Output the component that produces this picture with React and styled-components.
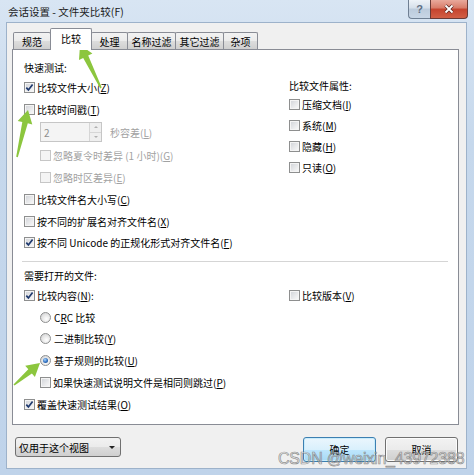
import React from 'react';
import styled, { createGlobalStyle } from 'styled-components';

const GlobalStyle = createGlobalStyle`
  html, body {
    margin: 0;
    padding: 0;
    background: #ffffff;
  }
  body {
    font-family: "Noto Sans CJK SC", "Noto Sans", sans-serif;
    font-size: 10px;
    color: #000;
  }
`;

const Window = styled.div`
  position: relative;
  width: 474px;
  height: 475px;
  display: flex;
  flex-direction: column;
  background: linear-gradient(180deg, #d8e5f3 0%, #c6d8ec 30%, #bfd3ea 100%);
  overflow: hidden;
`;

const TitleBar = styled.div`
  height: 22px;
  display: flex;
  align-items: flex-start;
  flex: none;
`;

const TitleText = styled.div`
  height: 23px;
  display: flex;
  align-items: center;
  padding-left: 8px;
  font-size: 10.5px;
  color: #1a1a1a;
`;

const CaptionButtons = styled.div`
  margin-left: auto;
  margin-right: 6px;
  display: flex;
`;

const HelpButton = styled.div`
  width: 22px;
  height: 19px;
  box-sizing: border-box;
  border: 1px solid #6f7f93;
  border-top: none;
  border-right: none;
  border-radius: 0 0 0 4px;
  background: linear-gradient(180deg, #eef3f8 0%, #d5dfea 45%, #bccbdc 50%, #c8d6e6 100%);
  display: flex;
  align-items: center;
  justify-content: center;
  font-family: "Liberation Sans", sans-serif;
  font-weight: bold;
  font-size: 11px;
  color: #5f6f84;
`;

const CloseButton = styled.div`
  width: 38px;
  height: 19px;
  box-sizing: border-box;
  border: 1px solid #6a3a36;
  border-top: none;
  border-radius: 0 0 4px 0;
  background: linear-gradient(180deg, #e9a99c 0%, #d87b68 45%, #c5432e 50%, #d25f45 100%);
  display: flex;
  align-items: center;
  justify-content: center;
`;

const Client = styled.div`
  flex: 1;
  margin: 0 7px 6px 6px;
  background: #f0f0f0;
  border: 1px solid #9db2ca;
  display: flex;
  flex-direction: column;
  padding: 5px 7px 0 5px;
  min-height: 0;
`;

const TabStrip = styled.div`
  display: flex;
  align-items: flex-end;
  height: 21px;
  padding-left: 2px;
  flex: none;
`;

const Tab = styled.div`
  position: relative;
  z-index: ${p => (p.$active ? 2 : 1)};
  box-sizing: border-box;
  width: ${p => p.$w}px;
  height: ${p => (p.$active ? 22 : 17)}px;
  margin-bottom: ${p => (p.$active ? -1 : 0)}px;
  margin-left: -1px;
  border: 1px solid #898c95;
  border-bottom: none;
  border-radius: 2px 2px 0 0;
  background: ${p =>
    p.$active
      ? '#ffffff'
      : 'linear-gradient(180deg, #f2f2f2 0%, #ebebeb 50%, #dddddd 51%, #cfcfcf 100%)'};
  display: flex;
  align-items: center;
  justify-content: center;
  padding-bottom: ${p => (p.$active ? 3 : 0)}px;
`;

const Panel = styled.div`
  height: 376px;
  flex: none;
  box-sizing: border-box;
  border: 1px solid #898c95;
  background: #ffffff;
  padding: 7px 0 0 11px;
`;

const Section = styled.div`
  display: grid;
  grid-template-columns: 265px 1fr;
  margin-top: ${p => p.$top || 0}px;
`;

const Column = styled.div`
  display: flex;
  flex-direction: column;
  padding-top: ${p => p.$top || 0}px;
`;

const Row = styled.div`
  display: flex;
  align-items: center;
  height: ${p => p.$h || 22}px;
  padding-left: ${p => (p.$indent ? 16 : 0)}px;
  color: ${p => (p.$disabled ? '#a2a2a2' : '#000000')};
  white-space: nowrap;
`;

const Box = styled.span`
  flex: none;
  width: 11px;
  height: 11px;
  box-sizing: border-box;
  margin-right: 2px;
  border: 1px solid ${p => (p.$disabled ? '#c6c6c6' : '#8e8f8f')};
  background: ${p =>
    p.$disabled
      ? '#f4f4f4'
      : 'linear-gradient(135deg, #cfd2d7 0%, #e6e7e9 50%, #fbfbfb 100%)'};
  box-shadow: inset 0 0 0 1px #f4f4f4;
  display: flex;
  align-items: center;
  justify-content: center;
`;

const RadioCircle = styled.span`
  flex: none;
  width: 11px;
  height: 11px;
  box-sizing: border-box;
  margin-right: 3px;
  border-radius: 50%;
  border: 1px solid #8e8f8f;
  background: radial-gradient(circle at 60% 65%, #ffffff 0%, #e4e4e4 55%, #c9cbce 100%);
  display: flex;
  align-items: center;
  justify-content: center;
`;

const RadioDot = styled.span`
  width: 5px;
  height: 5px;
  border-radius: 50%;
  background: radial-gradient(circle at 40% 35%, #a9d6ff 0%, #2f6fc0 55%, #163f7a 100%);
`;

const Key = styled.span`
  text-decoration: underline;
`;

const SpinBox = styled.div`
  display: flex;
  width: 62px;
  height: 20px;
  box-sizing: border-box;
  border: 1px solid #c6c6c6;
  background: #f4f4f4;
`;

const SpinValue = styled.span`
  flex: 1;
  display: flex;
  align-items: center;
  padding-left: 3px;
  color: #8e8e8e;
`;

const SpinButtons = styled.div`
  width: 11px;
  display: flex;
  flex-direction: column;
  border-left: 1px solid #d6d6d6;
`;

const SpinHalf = styled.div`
  flex: 1;
  display: flex;
  align-items: center;
  justify-content: center;
  background: #efefef;
  border-bottom: ${p => (p.$up ? '1px solid #d6d6d6' : 'none')};
  &::after {
    content: '';
    border-left: 2px solid transparent;
    border-right: 2px solid transparent;
    ${p => (p.$up ? 'border-bottom: 2px solid #b0b0b0;' : 'border-top: 2px solid #b0b0b0;')}
  }
`;

const SpinLabel = styled.span`
  margin-left: 8px;
  color: #a2a2a2;
`;

const Separator = styled.div`
  height: 1px;
  background: #d5d5d5;
  margin: 8px 10px 0 -2px;
`;

const Footer = styled.div`
  flex: 1;
  display: flex;
  align-items: flex-start;
  padding: 12px 1px 0 3px;
`;

const Dropdown = styled.div`
  width: 106px;
  height: 20px;
  box-sizing: border-box;
  border: 1px solid #707070;
  border-radius: 3px;
  background: linear-gradient(180deg, #f2f2f2 0%, #ebebeb 50%, #dddddd 51%, #cfcfcf 100%);
  display: flex;
  align-items: center;
  padding: 0 5px 0 3px;
`;

const DropdownText = styled.span`
  flex: 1;
`;

const DropArrow = styled.span`
  border-left: 3px solid transparent;
  border-right: 3px solid transparent;
  border-top: 3px solid #222;
`;

const ButtonGroup = styled.div`
  margin-left: auto;
  display: flex;
  gap: 9px;
`;

const DialogButton = styled.div`
  width: 73px;
  height: 25px;
  box-sizing: border-box;
  border-radius: 3px;
  border: 1px solid ${p => (p.$primary ? '#3c7fb1' : '#707070')};
  background: ${p =>
    p.$primary
      ? 'linear-gradient(180deg, #eaf6fd 0%, #d9f0fc 50%, #bee6fd 51%, #a7d9f5 100%)'
      : 'linear-gradient(180deg, #f2f2f2 0%, #ebebeb 50%, #dddddd 51%, #cfcfcf 100%)'};
  box-shadow: inset 0 0 0 1px ${p => (p.$primary ? '#c8ecfc' : '#fcfcfc')};
  display: flex;
  align-items: center;
  justify-content: center;
  padding-bottom: 1px;
`;

const Watermark = styled.div`
  position: absolute;
  left: 278px;
  top: 450px;
  font-family: "Liberation Sans", Arial, sans-serif;
  font-size: 16px;
  letter-spacing: -0.2px;
  color: rgba(235, 235, 235, 0.55);
  -webkit-text-stroke: 0.7px rgba(110, 110, 110, 0.75);
  white-space: nowrap;
`;

const Overlay = styled.svg`
  position: absolute;
  left: 0;
  top: 0;
  pointer-events: none;
`;

const tabs = [
  { label: '规范', w: 38 },
  { label: '比较', w: 42, active: true },
  { label: '处理', w: 37 },
  { label: '名称过滤', w: 49 },
  { label: '其它过滤', w: 49 },
  { label: '杂项', w: 35 },
];

function arrowPoints(x1, y1, x2, y2) {
  const dx = x2 - x1;
  const dy = y2 - y1;
  const len = Math.hypot(dx, dy);
  const ux = dx / len;
  const uy = dy / len;
  const nx = -uy;
  const ny = ux;
  const headLen = 13;
  const headW = 7.5;
  const tailW = 0.8;
  const shaftW = 2.8;
  const bx = x2 - ux * headLen;
  const by = y2 - uy * headLen;
  const pts = [
    [x1 + nx * tailW, y1 + ny * tailW],
    [bx + nx * shaftW, by + ny * shaftW],
    [bx + nx * headW, by + ny * headW],
    [x2, y2],
    [bx - nx * headW, by - ny * headW],
    [bx - nx * shaftW, by - ny * shaftW],
    [x1 - nx * tailW, y1 - ny * tailW],
  ];
  return pts.map(p => p.map(v => v.toFixed(1)).join(',')).join(' ');
}

const Check = () => (
  <svg width="9" height="9" viewBox="0 0 9 9">
    <path d="M1.3 4.6 L3.4 6.9 L7.6 1.4" fill="none" stroke="#1f3a6e" strokeWidth="1.7" />
  </svg>
);

const CheckBox = ({ checked, disabled, indent, h, children }) => (
  <Row $h={h} $indent={indent} $disabled={disabled}>
    <Box $disabled={disabled}>{checked && <Check />}</Box>
    <span>{children}</span>
  </Row>
);

const Radio = ({ checked, h, children }) => (
  <Row $h={h} $indent>
    <RadioCircle>{checked && <RadioDot />}</RadioCircle>
    <span>{children}</span>
  </Row>
);

export default function App() {
  return (
    <>
      <GlobalStyle />
      <Window>
        <TitleBar>
          <TitleText>会话设置 - 文件夹比较(F)</TitleText>
          <CaptionButtons>
            <HelpButton>?</HelpButton>
            <CloseButton>
              <svg width="12" height="10" viewBox="0 0 12 10">
                <path d="M2.5 1.5 L9.5 8.5 M9.5 1.5 L2.5 8.5" stroke="#5a2520" strokeWidth="3.2" />
                <path d="M2.5 1.5 L9.5 8.5 M9.5 1.5 L2.5 8.5" stroke="#ffffff" strokeWidth="1.8" />
              </svg>
            </CloseButton>
          </CaptionButtons>
        </TitleBar>

        <Client>
          <TabStrip>
            {tabs.map(t => (
              <Tab key={t.label} $w={t.w} $active={t.active}>
                {t.label}
              </Tab>
            ))}
          </TabStrip>

          <Panel>
            <Section>
              <Column>
                <Row $h={20}>快速测试:</Row>
                <CheckBox checked h={21}>
                  比较文件大小(<Key>Z</Key>)
                </CheckBox>
                <CheckBox>
                  比较时间戳(<Key>T</Key>)
                </CheckBox>
                <Row $h={24} $indent>
                  <SpinBox>
                    <SpinValue>2</SpinValue>
                    <SpinButtons>
                      <SpinHalf $up />
                      <SpinHalf />
                    </SpinButtons>
                  </SpinBox>
                  <SpinLabel>
                    秒容差(<Key>L</Key>)
                  </SpinLabel>
                </Row>
                <CheckBox disabled indent>
                  忽略夏令时差异 (1 小时)(<Key>G</Key>)
                </CheckBox>
                <CheckBox disabled indent>
                  忽略时区差异(<Key>E</Key>)
                </CheckBox>
                <CheckBox>
                  比较文件名大小写(<Key>C</Key>)
                </CheckBox>
                <CheckBox>
                  按不同的扩展名对齐文件名(<Key>X</Key>)
                </CheckBox>
                <CheckBox checked h={21}>
                  按不同 Unicode 的正规化形式对齐文件名(<Key>F</Key>)
                </CheckBox>
              </Column>
              <Column $top={19}>
                <Row $h={18}>比较文件属性:</Row>
                <CheckBox h={21}>
                  压缩文档(<Key>I</Key>)
                </CheckBox>
                <CheckBox h={21}>
                  系统(<Key>M</Key>)
                </CheckBox>
                <CheckBox h={21}>
                  隐藏(<Key>H</Key>)
                </CheckBox>
                <CheckBox h={21}>
                  只读(<Key>O</Key>)
                </CheckBox>
              </Column>
            </Section>

            <Separator />

            <Section $top={3}>
              <Column>
                <Row $h={20}>需要打开的文件:</Row>
                <CheckBox checked h={21}>
                  比较内容(<Key>N</Key>):
                </CheckBox>
                <Radio>
                  C<Key>R</Key>C 比较
                </Radio>
                <Radio h={21}>
                  二进制比较(<Key>Y</Key>)
                </Radio>
                <Radio checked>
                  基于规则的比较(<Key>U</Key>)
                </Radio>
                <CheckBox indent>
                  如果快速测试说明文件是相同则跳过(<Key>P</Key>)
                </CheckBox>
                <CheckBox checked>
                  覆盖快速测试结果(<Key>O</Key>)
                </CheckBox>
              </Column>
              <Column $top={20}>
                <CheckBox h={21}>
                  比较版本(<Key>V</Key>)
                </CheckBox>
              </Column>
            </Section>
          </Panel>

          <Footer>
            <Dropdown>
              <DropdownText>仅用于这个视图</DropdownText>
              <DropArrow />
            </Dropdown>
            <ButtonGroup>
              <DialogButton $primary>确定</DialogButton>
              <DialogButton>取消</DialogButton>
            </ButtonGroup>
          </Footer>
        </Client>

        <Watermark>CSDN @weixin_43972388</Watermark>

        <Overlay width="474" height="475" viewBox="0 0 474 475">
          <polygon points={arrowPoints(101, 88, 80, 45)} fill="#8cc63e" />
          <polygon points={arrowPoints(17, 157, 28, 110)} fill="#8cc63e" />
          <polygon points={arrowPoints(14, 385, 40, 363)} fill="#8cc63e" />
        </Overlay>
      </Window>
    </>
  );
}
